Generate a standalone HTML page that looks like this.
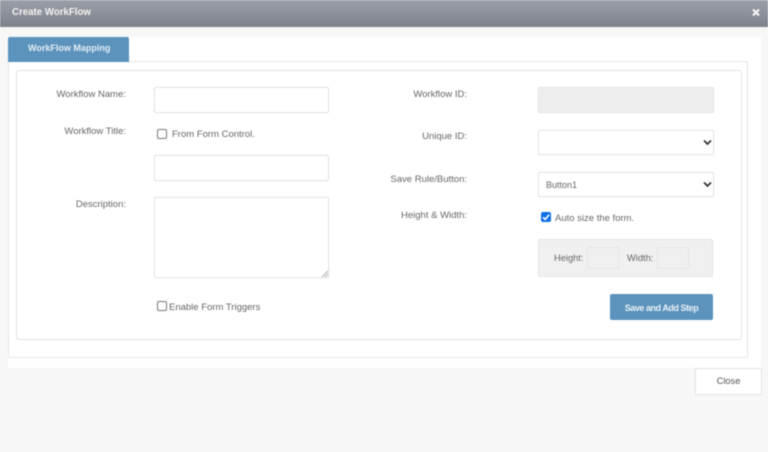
<!DOCTYPE html>
<html>
<head>
<meta charset="utf-8">
<style>
html,body{margin:0;padding:0;width:768px;height:452px;overflow:hidden;background:#f7f7f7}
#p{position:relative;width:768px;height:452px;overflow:hidden;font-family:"Liberation Sans",sans-serif;filter:blur(.4px);background:#f7f7f7}
#p div,#p span.t{position:absolute;box-sizing:border-box}
.t{white-space:nowrap;font-size:9.5px;letter-spacing:0;color:#666;line-height:12px}
.r{text-align:right}
.i{border:1px solid #e4e4e4;border-radius:2px;background:#fff;box-shadow:0 0 1px #e8e8e8}
svg{position:absolute;display:block}
</style>
</head>
<body>
<div id="p">
<div style="left:0;top:0;width:768px;height:27px;background:linear-gradient(#9b9fa7,#7e828b)"></div>
<span class="t" style="left:12px;top:7px;font-size:9.7px;font-weight:bold;color:#f2f2f2">Create WorkFlow</span>
<svg style="left:752px;top:8px" width="8" height="9" viewBox="0 0 8 9"><path d="M1 1.5L7 7.5M7 1.5L1 7.5" stroke="#f4f4f4" stroke-width="2.2"/></svg>

<div style="left:8px;top:37px;width:753px;height:331px;background:#fff"></div>
<div style="left:8px;top:61px;width:740px;height:297px;border:1px solid #e4e4e4;border-radius:2px;background:#fff"></div>
<div style="left:8px;top:37px;width:121px;height:25px;background:#5b93bd;border-radius:2px 2px 0 0"></div>
<span class="t" style="left:28px;top:42px;font-size:9px;font-weight:bold;color:#e4eef5">WorkFlow Mapping</span>
<div style="left:16px;top:70px;width:726px;height:270px;border:1px solid #e2e2e2;border-radius:3px;background:#fff"></div>

<span class="t r" style="left:26px;width:100px;top:89px">Workflow Name:</span>
<span class="t r" style="left:26px;width:100px;top:126px">Workflow Title:</span>
<span class="t r" style="left:26px;width:100px;top:199px">Description:</span>
<div class="i" style="left:154px;top:87px;width:175px;height:26px"></div>
<div class="i" style="left:154px;top:155px;width:175px;height:26px"></div>
<div class="i" style="left:154px;top:197px;width:175px;height:81px"></div>
<svg style="left:321px;top:270px" width="8" height="8" viewBox="0 0 8 8"><path d="M1 7L7 1M4 7L7 4" stroke="#999" stroke-width=".8"/></svg>

<div style="left:157px;top:129px;width:10px;height:10px;border:1px solid #767676;border-radius:2px;background:#fff"></div>
<span class="t" style="left:172px;top:129px">From Form Control.</span>
<div style="left:157px;top:301px;width:10px;height:10px;border:1px solid #767676;border-radius:2px;background:#fff"></div>
<span class="t" style="left:169px;top:302px">Enable Form Triggers</span>

<span class="t r" style="left:367px;width:100px;top:89px">Workflow ID:</span>
<span class="t r" style="left:367px;width:100px;top:131px">Unique ID:</span>
<span class="t r" style="left:367px;width:100px;top:174px">Save Rule/Button:</span>
<span class="t r" style="left:367px;width:100px;top:210px">Height &amp; Width:</span>

<div class="i" style="left:538px;top:87px;width:176px;height:26px;background:#eee"></div>
<div class="i" style="left:538px;top:130px;width:176px;height:25px"></div>
<svg style="left:703px;top:139px" width="9" height="7" viewBox="0 0 9 7"><path d="M1 1.5L4.5 5L8 1.5" fill="none" stroke="#333" stroke-width="1.7"/></svg>
<div class="i" style="left:538px;top:172px;width:176px;height:25px"></div>
<span class="t" style="left:546px;top:179px;font-size:9px">Button1</span>
<svg style="left:703px;top:181px" width="9" height="7" viewBox="0 0 9 7"><path d="M1 1.5L4.5 5L8 1.5" fill="none" stroke="#333" stroke-width="1.7"/></svg>

<div style="left:541px;top:212px;width:10px;height:10px;border-radius:2px;background:#0f6fe8"></div>
<svg style="left:541px;top:212px" width="10" height="10" viewBox="0 0 10 10"><path d="M2 5.2L4.2 7.4L8.2 2.6" fill="none" stroke="#fff" stroke-width="1.6"/></svg>
<span class="t" style="left:555px;top:213px">Auto size the form.</span>

<div style="left:538px;top:239px;width:175px;height:38px;border:1px solid #e4e4e4;border-radius:2px;background:#f0f0f0"></div>
<span class="t" style="left:554px;top:252px;font-size:9.3px">Height:</span>
<div style="left:587px;top:247px;width:32px;height:22px;border:1px solid #e4e4e4;border-radius:2px;background:#f0f0f0"></div>
<span class="t" style="left:627px;top:252px;font-size:9.3px">Width:</span>
<div style="left:657px;top:247px;width:32px;height:22px;border:1px solid #e4e4e4;border-radius:2px;background:#f0f0f0"></div>

<div style="left:610px;top:294px;width:103px;height:26px;background:#5b93bd;border-radius:2px"></div>
<span class="t" style="left:610px;width:103px;top:302px;text-align:center;font-size:9px;font-weight:bold;color:#e8f0f6;letter-spacing:-.45px">Save and Add Step</span>

<div style="left:695px;top:368px;width:67px;height:27px;background:#fff;border:1px solid #e2e2e2"></div>
<span class="t" style="left:695px;width:67px;top:375px;text-align:center;font-size:9.3px;color:#555">Close</span>
</div>
</body>
</html>
